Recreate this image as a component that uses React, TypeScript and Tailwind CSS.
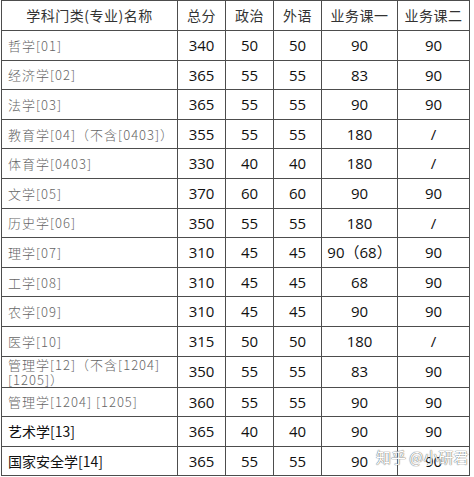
import React from "react";

interface Row {
  name: string;
  total: string;
  politics: string;
  foreign: string;
  course1: string;
  course2: string;
  bold?: boolean;
}

const rows: Row[] = [
  { name: "哲学[01]", total: "340", politics: "50", foreign: "50", course1: "90", course2: "90" },
  { name: "经济学[02]", total: "365", politics: "55", foreign: "55", course1: "83", course2: "90" },
  { name: "法学[03]", total: "365", politics: "55", foreign: "55", course1: "90", course2: "90" },
  { name: "教育学[04]（不含[0403]）", total: "355", politics: "55", foreign: "55", course1: "180", course2: "/" },
  { name: "体育学[0403]", total: "330", politics: "40", foreign: "40", course1: "180", course2: "/" },
  { name: "文学[05]", total: "370", politics: "60", foreign: "60", course1: "90", course2: "90" },
  { name: "历史学[06]", total: "350", politics: "55", foreign: "55", course1: "180", course2: "/" },
  { name: "理学[07]", total: "310", politics: "45", foreign: "45", course1: "90（68）", course2: "90" },
  { name: "工学[08]", total: "310", politics: "45", foreign: "45", course1: "68", course2: "90" },
  { name: "农学[09]", total: "310", politics: "45", foreign: "45", course1: "90", course2: "90" },
  { name: "医学[10]", total: "315", politics: "50", foreign: "50", course1: "180", course2: "/" },
  { name: "管理学[12]（不含[1204][1205]）", total: "350", politics: "55", foreign: "55", course1: "83", course2: "90" },
  { name: "管理学[1204] [1205]", total: "360", politics: "55", foreign: "55", course1: "90", course2: "90" },
  { name: "艺术学[13]", total: "365", politics: "40", foreign: "40", course1: "90", course2: "90", bold: true },
  { name: "国家安全学[14]", total: "365", politics: "55", foreign: "55", course1: "90", course2: "90", bold: true },
];

const headers = ["学科门类(专业)名称", "总分", "政治", "外语", "业务课一", "业务课二"];

const cell = "border border-[#4d4d4d] p-0 text-center align-middle";
const num = "border border-[#4d4d4d] p-0 text-center align-middle font-['Open_Sans','Noto_Sans_CJK_SC',sans-serif] text-[15px] text-[#111]";

export default function App() {
  return (
    <div className="relative h-[477px] w-[474px] overflow-hidden bg-white">
      <table className="ml-[1px] w-[468px] table-fixed border-collapse">
        <colgroup>
          <col className="w-[176px]" />
          <col className="w-[48px]" />
          <col className="w-[48px]" />
          <col className="w-[48px]" />
          <col className="w-[76px]" />
          <col className="w-[72px]" />
        </colgroup>
        <thead>
          <tr className="h-[30px]">
            {headers.map((h) => (
              <th
                key={h}
                className={`${cell} font-['Noto_Sans_CJK_SC',sans-serif] text-[14px] font-normal tracking-[0.5px] text-[#333]`}
              >
                {h}
              </th>
            ))}
          </tr>
        </thead>
        <tbody>
          {rows.map((r) => (
            <tr key={r.name} className="h-[29.6px]">
              <td
                className={
                  r.bold
                    ? "border border-[#4d4d4d] px-[6px] py-0 text-left align-middle font-['Noto_Sans_CJK_SC',sans-serif] text-[14px] leading-[15px] text-[#111]"
                    : "border border-[#4d4d4d] px-[6px] py-0 text-left align-middle font-['Noto_Sans_CJK_SC',sans-serif] text-[13px] leading-[15px] font-light tracking-[1px] text-[#666]"
                }
              >
                {r.name}
              </td>
              <td className={num}>{r.total}</td>
              <td className={num}>{r.politics}</td>
              <td className={num}>{r.foreign}</td>
              <td className={num}>{r.course1}</td>
              <td className={num}>{r.course2}</td>
            </tr>
          ))}
        </tbody>
      </table>
      <div className="absolute left-[376px] top-[446px] font-['Noto_Sans_CJK_SC',sans-serif] text-[15px] text-white opacity-90 [text-shadow:0_0_1px_#555,0_0_1px_#555]">
        知乎 @小研君
      </div>
    </div>
  );
}
